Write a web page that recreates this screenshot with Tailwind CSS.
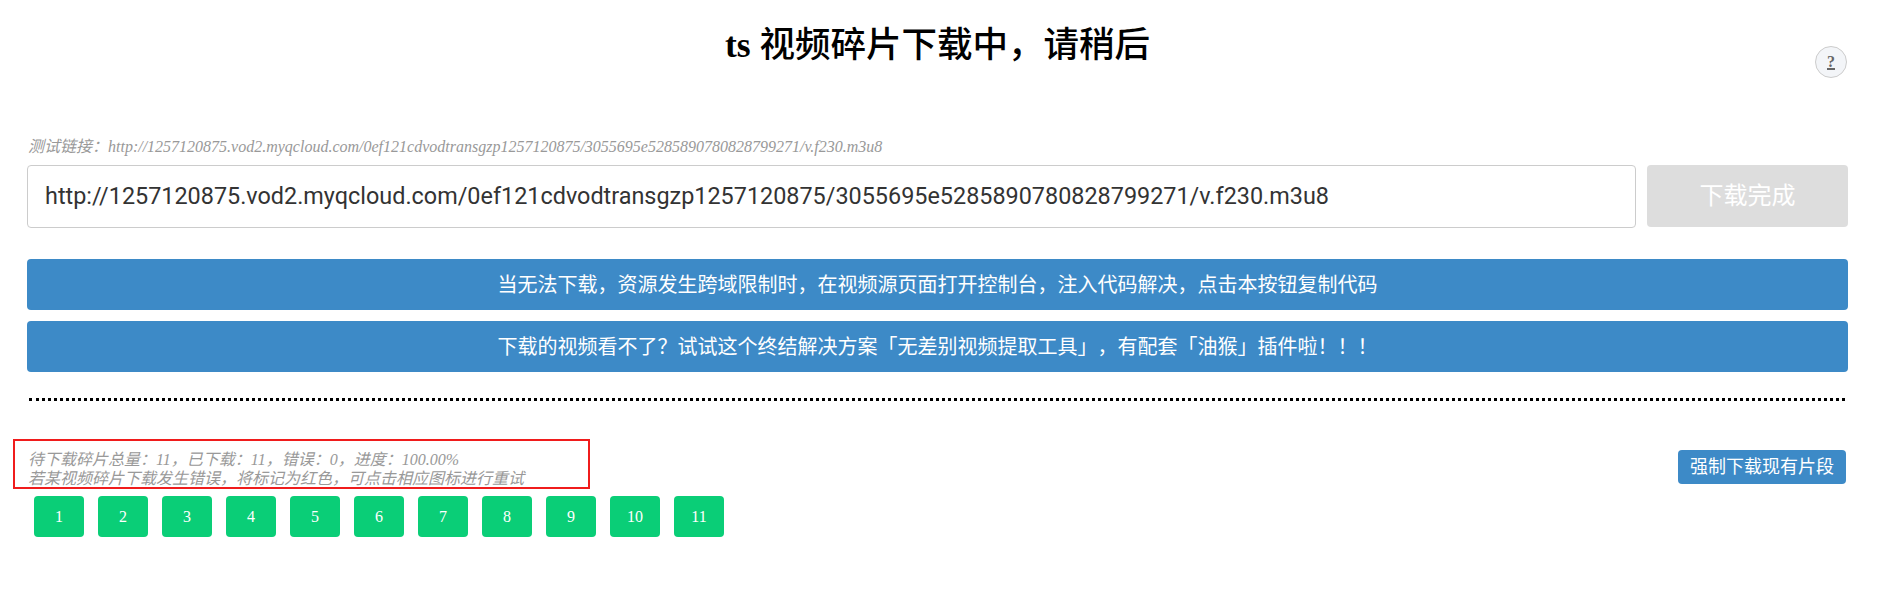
<!doctype html>
<html lang="zh">
<head>
<meta charset="utf-8">
<title>m3u8 下载</title>
<script src="https://cdn.jsdelivr.net/npm/@tailwindcss/browser@4"></script>
</head>
<body class="bg-white font-['Liberation_Serif','Noto_Sans_CJK_SC',serif] text-black [text-spacing-trim:space-all]">
<div class="relative h-[602px] w-[1877px] overflow-hidden">
  <!-- help -->
  <div class="absolute left-[1815px] top-[46px] flex h-8 w-8 items-center justify-center rounded-full border border-[#ccc] bg-[#f3f5f8] text-base font-bold text-[#666] underline decoration-2">?</div>

  <h1 class="pt-[21px] pr-[2px] text-center text-[35.5px] leading-[48px] font-bold">ts <span class="font-medium">视频碎片下载中，请稍后</span></h1>

  <section class="mt-[64px] ml-[27px] w-[1821px]">
    <div class="h-[28px] pt-[2px] pl-px text-base leading-[24px] text-[#999] italic">测试链接：http://1257120875.vod2.myqcloud.com/0ef121cdvodtransgzp1257120875/3055695e5285890780828799271/v.f230.m3u8</div>
    <div class="mt-[4px] flex gap-[11px]">
      <div class="flex h-[63px] w-[1609px] items-center rounded border border-[#ccc] bg-white pl-[17px] font-['Roboto',sans-serif] text-[23.4px] text-[#333]">http://1257120875.vod2.myqcloud.com/0ef121cdvodtransgzp1257120875/3055695e5285890780828799271/v.f230.m3u8</div>
      <button class="h-[62px] w-[201px] rounded-sm bg-[#ddd] text-2xl text-white">下载完成</button>
    </div>
    <button class="mt-[31px] block h-[51px] w-full rounded-sm bg-[#3d8ac7] text-xl text-white">当无法下载，资源发生跨域限制时，在视频源页面打开控制台，注入代码解决，点击本按钮复制代码</button>
    <button class="mt-[11px] block h-[51px] w-full rounded-sm bg-[#3d8ac7] text-xl text-white">下载的视频看不了？试试这个终结解决方案「无差别视频提取工具」，有配套「油猴」插件啦！！！</button>
    <div class="mt-[26px] ml-[2px] w-[1816px] border-t-[3px] border-dotted border-black"></div>
  </section>

  <section class="mt-[49px] ml-[28px] flex w-[1818px] items-start justify-between">
    <div class="text-base leading-[19px] text-[#999] italic">
      <div>待下载碎片总量：11，已下载：11，错误：0，进度：100.00%</div>
      <div>若某视频碎片下载发生错误，将标记为红色，可点击相应图标进行重试</div>
    </div>
    <button class="h-[34px] w-[168px] rounded-sm bg-[#3d8ac7] text-lg text-white">强制下载现有片段</button>
  </section>

  <div class="mt-[8px] ml-[34px] flex gap-[14px] text-base text-white">
    <div class="flex h-[41px] w-[50px] items-center justify-center rounded-sm bg-[#0ace77]">1</div>
    <div class="flex h-[41px] w-[50px] items-center justify-center rounded-sm bg-[#0ace77]">2</div>
    <div class="flex h-[41px] w-[50px] items-center justify-center rounded-sm bg-[#0ace77]">3</div>
    <div class="flex h-[41px] w-[50px] items-center justify-center rounded-sm bg-[#0ace77]">4</div>
    <div class="flex h-[41px] w-[50px] items-center justify-center rounded-sm bg-[#0ace77]">5</div>
    <div class="flex h-[41px] w-[50px] items-center justify-center rounded-sm bg-[#0ace77]">6</div>
    <div class="flex h-[41px] w-[50px] items-center justify-center rounded-sm bg-[#0ace77]">7</div>
    <div class="flex h-[41px] w-[50px] items-center justify-center rounded-sm bg-[#0ace77]">8</div>
    <div class="flex h-[41px] w-[50px] items-center justify-center rounded-sm bg-[#0ace77]">9</div>
    <div class="flex h-[41px] w-[50px] items-center justify-center rounded-sm bg-[#0ace77]">10</div>
    <div class="flex h-[41px] w-[50px] items-center justify-center rounded-sm bg-[#0ace77]">11</div>
  </div>

  <!-- red annotation box -->
  <div class="absolute left-[13px] top-[439px] h-[50px] w-[577px] border-2 border-[#f01c1c]"></div>
</div>
</body>
</html>
